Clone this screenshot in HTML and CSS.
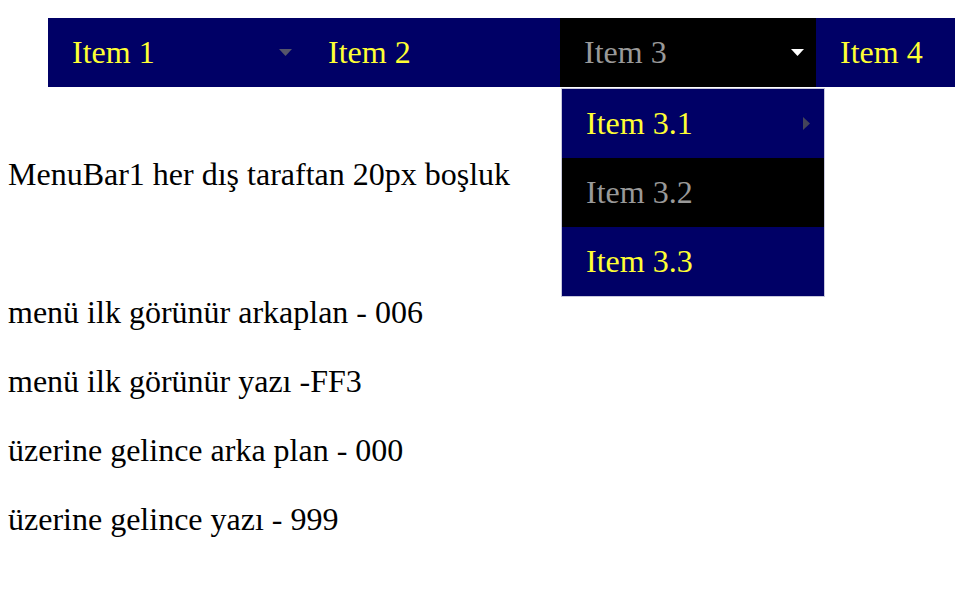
FILE: index.html
```html
<!DOCTYPE html>
<html lang="tr">
<head>
<meta charset="utf-8">
<title>MenuBar</title>
<link rel="stylesheet" href="styles.css">
</head>
<body>
<div class="page">
<ul class="menubar">
  <li class="menu-item">
    <a class="menu-link" href="#"><span>Item 1</span>
      <svg class="arrow-down" width="13" height="7" viewBox="0 0 13 7"><path d="M0 0H13L6.5 7Z" fill="#55556a"/></svg>
    </a>
  </li>
  <li class="menu-item">
    <a class="menu-link" href="#"><span>Item 2</span></a>
  </li>
  <li class="menu-item">
    <a class="menu-link is-hover" href="#"><span>Item 3</span>
      <svg class="arrow-down" width="13" height="7" viewBox="0 0 13 7"><path d="M0 0H13L6.5 7Z" fill="#ffffff"/></svg>
    </a>
    <ul class="submenu">
      <li class="sub-item">
        <a class="menu-link sub-link" href="#"><span>Item 3.1</span>
          <svg class="arrow-right" width="7" height="13" viewBox="0 0 7 13"><path d="M0 0V13L7 6.5Z" fill="#44445a"/></svg>
        </a>
      </li>
      <li class="sub-item">
        <a class="menu-link sub-link is-hover" href="#"><span>Item 3.2</span></a>
      </li>
      <li class="sub-item">
        <a class="menu-link sub-link" href="#"><span>Item 3.3</span></a>
      </li>
    </ul>
  </li>
  <li class="menu-item">
    <a class="menu-link" href="#"><span>Item 4</span></a>
  </li>
</ul>

<div class="content">
  <p class="first">MenuBar1 her dış taraftan 20px boşluk</p>
  <p>&nbsp;</p>
  <p>menü ilk görünür arkaplan - 006</p>
  <p>menü ilk görünür yazı -FF3</p>
  <p>üzerine gelince arka plan - 000</p>
  <p>üzerine gelince yazı - 999</p>
</div>
</div>
</body>
</html>
```

FILE: styles.css
```css
html {
  overflow: hidden;
}

body {
  margin: 0;
  font-family: "Liberation Serif", "Times New Roman", serif;
  font-size: 32px;
  color: #000;
  background: #fff;
}

.page {
  overflow: hidden;
  min-height: 607px;
}

.menubar {
  list-style: none;
  margin: 18px 0 0 48px;
  padding: 0;
  display: flex;
  width: 1024px;
}

.menu-item {
  position: relative;
  width: 256px;
  flex: none;
}

.menu-link {
  display: flex;
  align-items: center;
  justify-content: space-between;
  padding: 16px 12px 16px 24px;
  background: #000066;
  color: #ffff33;
  text-decoration: none;
}

.menu-link.is-hover {
  background: #000;
  color: #999;
}

.arrow-down {
  flex: none;
}

.submenu {
  position: absolute;
  top: 100%;
  left: 0;
  margin: 1px 0 0 1px;
  padding: 0;
  list-style: none;
  width: 262px;
  border: 1px solid #c8c8dc;
  z-index: 10;
}

.sub-link {
  padding-right: 14px;
}

.arrow-right {
  flex: none;
}

.content {
  padding: 0 8px;
}

.content p {
  margin: 32px 0;
}

.content p.first {
  margin-top: 69px;
}
```
